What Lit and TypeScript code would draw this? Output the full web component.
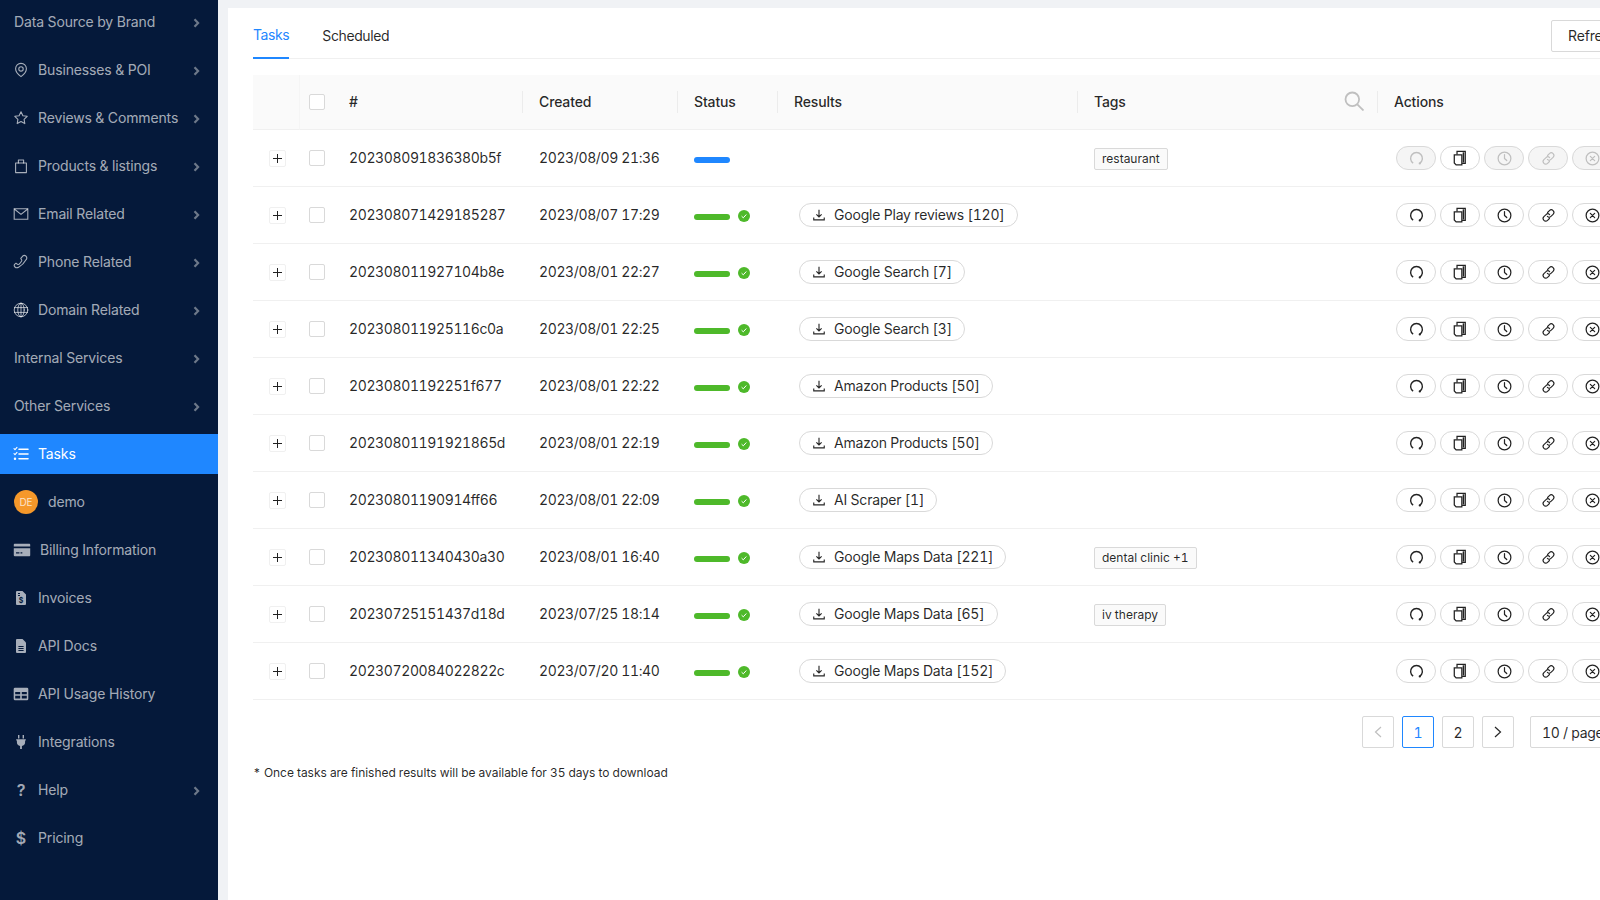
import { LitElement, html, css, svg } from "lit";
import { customElement } from "lit/decorators.js";

const stroke = (body: unknown, size = 16, w = 1.1) => html`<svg
  width=${size}
  height=${size}
  viewBox="0 0 16 16"
  fill="none"
  stroke="currentColor"
  stroke-width=${w}
  stroke-linecap="round"
  stroke-linejoin="round"
>
  ${body}
</svg>`;

const solid = (body: unknown, size = 16) => html`<svg
  width=${size}
  height=${size}
  viewBox="0 0 16 16"
  fill="currentColor"
>
  ${body}
</svg>`;

const icons: Record<string, () => unknown> = {
  pin: () =>
    stroke(svg`<path d="M8 14.6C5.6 12.9 2.6 10 2.6 6.800a5.400 5.400 0 0 1 10.800 0C13.400 10 10.400 12.900 8 14.600z"/><circle cx="8" cy="6.900" r="2.200"/>`),
  star: () =>
    stroke(svg`<path d="M8 1.800l1.900 3.900 4.300.6-3.100 3 .7 4.300L8 11.600l-3.800 2 .7-4.300-3.100-3 4.300-.6z"/>`),
  bag: () =>
    stroke(svg`<path d="M2.600 5h10.800v9.600H2.600z"/><path d="M5.400 5V2h5.200v3"/>`),
  mail: () =>
    stroke(svg`<path d="M1.200 2.800h13.600v10.400H1.200z" stroke-linejoin="miter"/><path d="M1.600 3.200L8 8.400l6.400-5.200"/>`),
  phone: () =>
    stroke(svg`<path d="M10 1.800c1-.8 2-.6 3 .4s1 2.200.2 3.400c-1.400 2.600-4.600 6-7.600 7.600-1.400.8-2.600.8-3.600-.2s-1-1.800-.4-2.600l1.400-1.200 2 1.400 1-.4c1-.8 2-2 2.600-3.200l.2-.8-1-1.800z"/>`),
  globe: () =>
    stroke(svg`<circle cx="8" cy="8" r="6.800"/><ellipse cx="8" cy="8" rx="3.200" ry="6.800"/><path d="M8 1.200v13.600M1.400 5.600h13.200M1.400 10.400h13.200"/>`, 16, 1),
  tasks: () =>
    stroke(svg`<path d="M6 3.200h9M6 8h9M6 12.800h9" stroke-width="1.600"/><path d="M1 2.600l1 1 2-2.200M1 7.600l1 1 2-2.200" /><circle cx="2" cy="12.800" r=".7" fill="currentColor"/>`),
  card: () =>
    solid(svg`<path d="M1.600 2.500h12.800c.5 0 .9.4.9.9v1.400H.7V3.400c0-.5.4-.9.9-.9zM.7 6.400h14.600v6.200c0 .5-.4.9-.9.9H1.600a.9.9 0 0 1-.9-.9zm2 3.600v1.200h3V10zm4 0v1.200h1.600V10z"/>`, 18),
  invoice: () =>
    html`<svg width="16" height="16" viewBox="0 0 16 16">
      <path fill="currentColor" d="M3 1h6.500L13 4.500V14a1 1 0 0 1-1 1H4a1 1 0 0 1-1-1V2a1 1 0 0 1 1-1z" />
      <path fill="#05193a" d="M5 3h2v1H5zM5 5h2v1H5z" />
      <text x="8" y="12.800" font-size="7" font-weight="700" text-anchor="middle" fill="#05193a" font-family="Inter, sans-serif">$</text>
    </svg>`,
  doc: () =>
    html`<svg width="16" height="16" viewBox="0 0 16 16">
      <path fill="currentColor" d="M4 1h5.500L13 4.500V14a1 1 0 0 1-1 1H4a1 1 0 0 1-1-1V2a1 1 0 0 1 1-1z" />
      <path fill="#05193a" d="M5.400 8h5.200v1H5.400zM5.400 10h5.200v1H5.400zM5.400 12h5.200v1H5.400z" />
    </svg>`,
  table: () =>
    solid(svg`<path fill-rule="evenodd" d="M2 1.800h12A1.300 1.300 0 0 1 15.300 3.100v9.800A1.300 1.300 0 0 1 14 14.200H2A1.300 1.300 0 0 1 .7 12.900V3.100A1.300 1.300 0 0 1 2 1.800zM2.200 6v2.200h5V6zm6.600 0v2.200h5V6zM2.200 9.800V12.400h5V9.800zm6.600 0v2.600h5V9.800z"/>`),
  plug: () =>
    solid(svg`<path d="M5 1h1.400v3.600H5zM9.600 1H11v3.600H9.600zM3.200 5.200h9.600v1.400h-.7v1.600c0 2-1.300 3.500-3.200 3.800V15H7.100v-3c-1.900-.3-3.200-1.800-3.200-3.800V6.600h-.7z"/>`),
  redo: () =>
    stroke(svg`<path d="M4.400 13A6.300 6.300 0 1 1 11.600 13" stroke-linecap="butt"/><circle cx="11.500" cy="13.200" r="1.200" fill="currentColor" stroke="none"/>`, 15, 1.500),
  copy: () =>
    html`<svg width="16" height="16" viewBox="0 0 14 14" fill="none" stroke="currentColor" stroke-width="1.100">
      <path d="M2 4.200h6.600v8.800H3.600L2 11.400z" />
      <path d="M4.400 4V1.200h7.200v10.400H8.800" />
      <path d="M10 2v9" stroke-width="1.300" />
    </svg>`,
  clock: () =>
    stroke(svg`<circle cx="8" cy="8" r="6.800"/><path d="M8 3.800V8l2.400 2.200"/>`, 15, 1.300),
  link: () =>
    stroke(svg`<path d="M7 4.800l2-2a2.700 2.700 0 0 1 3.900 3.900l-2.300 2.300a2.700 2.700 0 0 1-3.800 0"/><path d="M9 11.200l-2 2a2.700 2.700 0 0 1-3.900-3.900l2.300-2.300a2.700 2.700 0 0 1 3.800 0"/>`, 15, 1.200),
  cancel: () =>
    stroke(svg`<circle cx="8" cy="8" r="6.800"/><path d="M5.700 5.700l4.600 4.600M10.300 5.700l-4.600 4.600"/>`, 15, 1.300),
  download: () =>
    stroke(svg`<path d="M8 2v8M5 7.200L8 10.200l3-3M2 10.800v2.800h12v-2.800" stroke-linecap="butt" stroke-linejoin="miter"/>`, 14, 1.300),
  search: () =>
    html`<svg width="20" height="20" viewBox="0 0 20 20" fill="none" stroke="currentColor" stroke-width="1.800">
      <circle cx="8.300" cy="8.300" r="6.800" />
      <path d="M13.300 13.300L19.500 19.500" />
    </svg>`,
  check: () =>
    html`<svg width="12" height="12" viewBox="0 0 12 12">
      <circle cx="6" cy="6" r="6" fill="#4eb92a" />
      <path d="M3.600 6.200l1.700 1.600 3-3.300" fill="none" stroke="#fff" stroke-width="1" />
    </svg>`,
  chevron: () =>
    html`<svg width="7" height="10" viewBox="0 0 7 10" fill="none" stroke="currentColor" stroke-width="2.200">
      <path d="M1.500 1.200l3.600 3.800-3.600 3.800" />
    </svg>`,
};

type NavItem = {
  label: string;
  icon?: string;
  glyph?: string;
  sub?: boolean;
  active?: boolean;
  avatar?: boolean;
  wide?: boolean;
};

const navItems: NavItem[] = [
  { label: "Data Source by Brand", sub: true },
  { label: "Businesses & POI", icon: "pin", sub: true },
  { label: "Reviews & Comments", icon: "star", sub: true },
  { label: "Products & listings", icon: "bag", sub: true },
  { label: "Email Related", icon: "mail", sub: true },
  { label: "Phone Related", icon: "phone", sub: true },
  { label: "Domain Related", icon: "globe", sub: true },
  { label: "Internal Services", sub: true },
  { label: "Other Services", sub: true },
  { label: "Tasks", icon: "tasks", active: true },
  { label: "demo", avatar: true },
  { label: "Billing Information", icon: "card", wide: true },
  { label: "Invoices", icon: "invoice" },
  { label: "API Docs", icon: "doc" },
  { label: "API Usage History", icon: "table" },
  { label: "Integrations", icon: "plug" },
  { label: "Help", glyph: "?", sub: true },
  { label: "Pricing", glyph: "$" },
];

type Task = { id: string; created: string; result?: string; tag?: string; running?: boolean };

const tasks: Task[] = [
  { id: "202308091836380b5f", created: "2023/08/09 21:36", tag: "restaurant", running: true },
  { id: "202308071429185287", created: "2023/08/07 17:29", result: "Google Play reviews [120]" },
  { id: "202308011927104b8e", created: "2023/08/01 22:27", result: "Google Search [7]" },
  { id: "202308011925116c0a", created: "2023/08/01 22:25", result: "Google Search [3]" },
  { id: "20230801192251f677", created: "2023/08/01 22:22", result: "Amazon Products [50]" },
  { id: "20230801191921865d", created: "2023/08/01 22:19", result: "Amazon Products [50]" },
  { id: "20230801190914ff66", created: "2023/08/01 22:09", result: "AI Scraper [1]" },
  { id: "202308011340430a30", created: "2023/08/01 16:40", result: "Google Maps Data [221]", tag: "dental clinic +1" },
  { id: "20230725151437d18d", created: "2023/07/25 18:14", result: "Google Maps Data [65]", tag: "iv therapy" },
  { id: "20230720084022822c", created: "2023/07/20 11:40", result: "Google Maps Data [152]" },
];

const actions = ["redo", "copy", "clock", "link", "cancel"];

@customElement("app-root")
export class AppRoot extends LitElement {
  renderNav(item: NavItem) {
    return html`
      <div class="nav-item ${item.active ? "active" : ""}">
        ${item.icon
          ? html`<span class="nav-icon ${item.wide ? "wide" : ""}">${icons[item.icon]()}</span>`
          : ""}
        ${item.glyph ? html`<span class="nav-icon glyph">${item.glyph}</span>` : ""}
        ${item.avatar ? html`<span class="avatar">DE</span>` : ""}
        <span class="nav-label">${item.label}</span>
        ${item.sub ? html`<span class="chevron">${icons.chevron()}</span>` : ""}
      </div>
    `;
  }

  renderRow(t: Task) {
    return html`
      <tr>
        <td class="center"><span class="expand"></span></td>
        <td class="sel"><span class="checkbox"></span></td>
        <td class="num">${t.id}</td>
        <td class="num">${t.created}</td>
        <td>
          <div class="status">
            <span class="bar ${t.running ? "running" : ""}"></span>
            ${t.running ? "" : icons.check()}
          </div>
        </td>
        <td class="results">
          ${t.result
            ? html`<span class="result-pill">${icons.download()}<span class="result-text">${t.result}</span></span>`
            : ""}
        </td>
        <td>${t.tag ? html`<span class="tag">${t.tag}</span>` : ""}</td>
        <td>
          <div class="actions">
            ${actions.map(
              (a) => html`<span
                class="action ${t.running && a !== "copy" ? "disabled" : ""}"
                >${icons[a]()}</span
              >`,
            )}
          </div>
        </td>
      </tr>
    `;
  }

  render() {
    return html`
      <aside class="sidebar">${navItems.map((i) => this.renderNav(i))}</aside>
      <main class="main">
        <div class="content">
          <div class="tabs">
            <div class="tab active">Tasks</div>
            <div class="tab">Scheduled</div>
            <button class="refresh">Refresh</button>
          </div>
          <table>
            <colgroup>
              <col style="width:47px" />
              <col style="width:33px" />
              <col style="width:190px" />
              <col style="width:155px" />
              <col style="width:100px" />
              <col style="width:300px" />
              <col style="width:300px" />
              <col />
            </colgroup>
            <thead>
              <tr>
                <th class="first"></th>
                <th class="sel"><span class="checkbox"></span></th>
                <th class="sep">#</th>
                <th class="sep">Created</th>
                <th class="sep">Status</th>
                <th class="sep">Results</th>
                <th class="sep">
                  <div class="tags-head">Tags<span class="search">${icons.search()}</span></div>
                </th>
                <th>Actions</th>
              </tr>
            </thead>
            <tbody>${tasks.map((t) => this.renderRow(t))}</tbody>
          </table>
          <div class="pagination">
            <span class="page off"
              ><svg width="10" height="12" viewBox="0 0 10 12" fill="none" stroke="currentColor" stroke-width="1.200">
                <path d="M8 1L2.500 6 8 11" /></svg
            ></span>
            <span class="page current">1</span>
            <span class="page">2</span>
            <span class="page"
              ><svg width="10" height="12" viewBox="0 0 10 12" fill="none" stroke="currentColor" stroke-width="1.200">
                <path d="M2 1l5.500 5L2 11" /></svg
            ></span>
            <span class="page size">10 / page</span>
          </div>
          <p class="note">* Once tasks are finished results will be available for 35 days to download</p>
        </div>
      </main>
    `;
  }

  static styles = css`
    :host {
      display: flex;
      width: 1600px;
      height: 900px;
      overflow: hidden;
      background: #f0f2f5;
      font-family: Inter, "Noto Sans", sans-serif;
      font-size: 14px;
      font-variant-numeric: tabular-nums;
      letter-spacing: -0.14px;
      color: rgba(0, 0, 0, 0.85);
    }
    svg {
      flex: none;
    }
    .sidebar {
      flex: none;
      width: 218px;
      background: #05193a;
      padding-top: 2px;
      display: flex;
      flex-direction: column;
      gap: 8px;
      box-sizing: border-box;
      color: rgba(255, 255, 255, 0.65);
    }
    .nav-item {
      height: 40px;
      flex: none;
      display: flex;
      align-items: center;
      padding-left: 14px;
      position: relative;
    }
    .nav-item.active {
      background: #1f87ff;
      color: #fff;
    }
    .nav-label {
      margin-top: -1px;
    }
    .nav-icon {
      width: 14px;
      margin-right: 10px;
      display: flex;
      justify-content: center;
      flex: none;
    }
    .nav-icon.wide {
      width: 16px;
    }
    .nav-icon.glyph {
      font-size: 16px;
      font-weight: 600;
    }
    .avatar {
      width: 24px;
      height: 24px;
      border-radius: 50%;
      background: #f5982a;
      color: rgba(255, 255, 255, 0.75);
      font-size: 10px;
      display: flex;
      align-items: center;
      justify-content: center;
      margin-right: 10px;
    }
    .chevron {
      margin-left: auto;
      margin-right: 18px;
      margin-top: 1px;
      display: flex;
      color: #6d7889;
    }
    .main {
      flex: 1;
      min-width: 0;
      margin: 8px 0 0 10px;
      background: #fff;
      padding-left: 25px;
      overflow: hidden;
    }
    .content {
      width: 1382px;
    }
    .tabs {
      height: 51px;
      box-sizing: border-box;
      display: flex;
      align-items: center;
      gap: 33px;
      border-bottom: 1px solid #f0f0f0;
    }
    .tab {
      height: 51px;
      box-sizing: border-box;
      display: flex;
      align-items: center;
      padding-top: 4px;
      letter-spacing: -0.4px;
    }
    .tab.active {
      color: #1f87ff;
      border-bottom: 2px solid #1f87ff;
    }
    .refresh {
      margin-left: auto;
      margin-top: 5px;
      height: 32px;
      padding: 0 15px;
      background: #fff;
      border: 1px solid #d9d9d9;
      border-radius: 2px;
      font: inherit;
      letter-spacing: inherit;
      color: inherit;
      width: 84px;
      white-space: nowrap;
    }
    table {
      width: 100%;
      margin-top: 16px;
      table-layout: fixed;
      border-collapse: separate;
      border-spacing: 0;
    }
    th {
      height: 55px;
      box-sizing: border-box;
      background: #fafafa;
      font-weight: 500;
      text-align: left;
      padding: 0 16px 2px;
      border-bottom: 1px solid #f0f0f0;
      position: relative;
    }
    th.first {
      border-right: 1px solid #f5f5f5;
      padding: 0;
    }
    th.sep::after {
      content: "";
      position: absolute;
      right: 0;
      top: 50%;
      height: 22px;
      margin-top: -11px;
      width: 1px;
      background: #ececec;
    }
    td {
      height: 57px;
      box-sizing: border-box;
      padding: 0 16px;
      border-bottom: 1px solid #f0f0f0;
      white-space: nowrap;
    }
    td.num {
      padding-bottom: 2px;
      letter-spacing: -0.38px;
    }
    td.center {
      padding: 0;
      text-align: center;
    }
    td.results {
      padding-left: 21px;
    }
    .sel {
      padding: 0 0 0 9px;
    }
    .checkbox {
      display: block;
      width: 16px;
      height: 16px;
      box-sizing: border-box;
      border: 1px solid #d9d9d9;
      border-radius: 2px;
      background: #fff;
    }
    .expand {
      display: inline-block;
      vertical-align: middle;
      width: 17px;
      height: 17px;
      box-sizing: border-box;
      margin-left: 2px;
      border: 1px solid #f0f0f0;
      border-radius: 2px;
      background: linear-gradient(#222, #222) center / 9px 1px no-repeat,
        linear-gradient(#222, #222) center / 1px 9px no-repeat, #fff;
    }
    .status {
      display: flex;
      align-items: center;
      gap: 8px;
      height: 14px;
      margin-top: 2px;
    }
    .bar {
      width: 36px;
      height: 6px;
      border-radius: 3px;
      background: #4eb92a;
      margin-top: 2px;
    }
    .bar.running {
      background: #1f87ff;
    }
    .result-pill {
      display: inline-flex;
      align-items: center;
      gap: 8px;
      height: 24px;
      box-sizing: border-box;
      padding: 0 12px;
      border: 1px solid #d9d9d9;
      border-radius: 12px;
      background: #fff;
    }
    .result-text {
      margin-top: -1px;
      letter-spacing: -0.2px;
    }
    .tag {
      display: inline-block;
      font-size: 12px;
      line-height: 20px;
      letter-spacing: 0;
      padding: 0 7px;
      margin-top: 2px;
      background: #fafafa;
      border: 1px solid #d9d9d9;
      border-radius: 2px;
    }
    .tags-head {
      display: flex;
      align-items: center;
      justify-content: space-between;
    }
    .search {
      display: flex;
      color: #bfbfbf;
      margin-right: -2px;
    }
    .actions {
      display: flex;
      gap: 4px;
      margin-left: 2px;
    }
    .action {
      flex: none;
      width: 40px;
      height: 24px;
      box-sizing: border-box;
      border: 1px solid #d9d9d9;
      border-radius: 12px;
      display: flex;
      align-items: center;
      justify-content: center;
      background: #fff;
      color: #222;
    }
    .action.disabled {
      background: #f5f5f5;
      color: #bfbfbf;
    }
    .pagination {
      display: flex;
      justify-content: flex-end;
      gap: 8px;
      margin-top: 16px;
    }
    .page {
      width: 32px;
      height: 32px;
      box-sizing: border-box;
      border: 1px solid #d9d9d9;
      border-radius: 2px;
      display: flex;
      align-items: center;
      justify-content: center;
    }
    .page.off {
      color: #bfbfbf;
    }
    .page.current {
      border-color: #1f87ff;
      color: #1f87ff;
    }
    .page.size {
      width: 105px;
      margin-left: 8px;
      justify-content: flex-start;
      padding-left: 11px;
      letter-spacing: -0.3px;
      white-space: nowrap;
    }
    .note {
      margin: 17px 0 0;
      font-size: 12px;
      line-height: 16px;
      letter-spacing: -0.05px;
    }
  `;
}

declare global {
  interface HTMLElementTagNameMap {
    "app-root": AppRoot;
  }
}
